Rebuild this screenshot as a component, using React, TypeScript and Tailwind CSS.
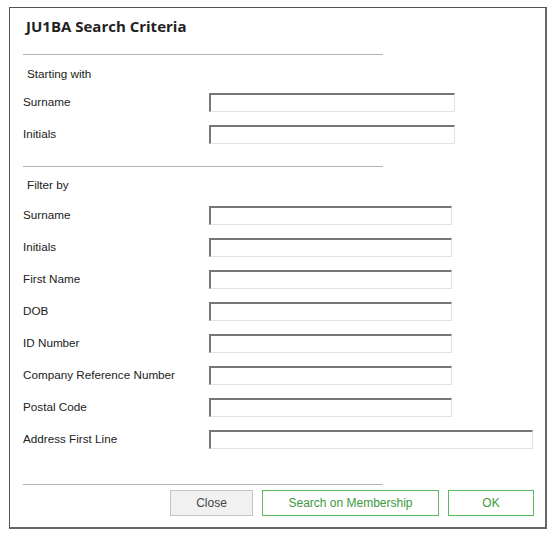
import React from 'react';

const startRows = [{ label: 'Surname' }, { label: 'Initials' }];
const filterRows = [
  { label: 'Surname', w: 'w-[243px]' },
  { label: 'Initials', w: 'w-[243px]' },
  { label: 'First Name', w: 'w-[243px]' },
  { label: 'DOB', w: 'w-[243px]' },
  { label: 'ID Number', w: 'w-[243px]' },
  { label: 'Company Reference Number', w: 'w-[243px]' },
  { label: 'Postal Code', w: 'w-[243px]' },
  { label: 'Address First Line', w: 'w-[324px]' },
];

function Field({ label, w }: { label: string; w: string }) {
  return (
    <div className="flex h-[32px] items-center">
      <span className="w-[186px] pt-[1px] text-[11.7px] text-[#222]">{label}</span>
      <input
        className={`${w} mt-[2px] h-[19px] border-t-2 border-l-2 border-r border-b border-t-[#777] border-l-[#777] border-r-[#e2e2e2] border-b-[#e2e2e2] bg-white outline-none`}
      />
    </div>
  );
}

export default function App() {
  return (
    <div className="w-[554px] h-[536px] bg-white pt-[7px] pl-[9px]" style={{ fontFamily: '"Liberation Sans", Arial, sans-serif' }}>
      <div className="w-[538px] h-[522px] border border-[#555] border-r-2 border-b-2 border-r-[#666] border-b-[#666] pl-[13px]">
        {/* title */}
        <div className="h-[36px] flex items-center pl-[3px]">
          <h1 className="text-[15px] font-bold text-[#222]" style={{ fontFamily: '"Open Sans", sans-serif' }}>
            JU1BA Search Criteria
          </h1>
        </div>
        <div className="mt-[10px] h-px w-[360px] bg-[#b4b4b4]" />

        <div className="mt-[8px] h-[22px] flex items-center pl-[4px] text-[11.7px] text-[#222]">Starting with</div>
        {startRows.map((r) => (
          <Field key={r.label} label={r.label} w="w-[246px]" />
        ))}

        <div className="mt-[17px] h-px w-[360px] bg-[#b4b4b4]" />
        <div className="mt-[7px] h-[22px] flex items-center pl-[4px] text-[11.7px] text-[#222]">Filter by</div>
        <div className="mt-[2px]">
          {filterRows.map((r) => (
            <Field key={r.label} label={r.label} w={r.w} />
          ))}
        </div>

        <div className="mt-[30px] h-px w-[360px] bg-[#b4b4b4]" />
        <div className="mt-[5px] flex justify-end gap-[9px] pr-[11px]">
          <button className="w-[83px] h-[26px] border border-[#c4c4c4] bg-[#f1f1f1] text-[12px] text-[#444]">Close</button>
          <button className="w-[177px] h-[26px] border border-[#5cb85c] bg-white text-[12px] text-[#3d9a3d]">Search on Membership</button>
          <button className="w-[86px] h-[26px] border border-[#5cb85c] bg-white text-[12px] text-[#3d9a3d]">OK</button>
        </div>
      </div>
    </div>
  );
}
